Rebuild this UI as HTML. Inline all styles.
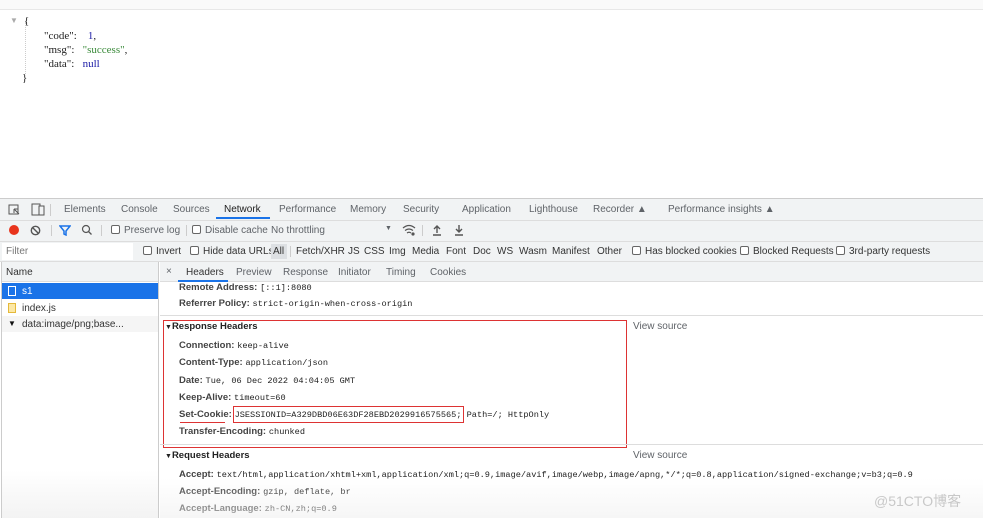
<!DOCTYPE html>
<html><head><meta charset="utf-8"><style>
*{margin:0;padding:0;box-sizing:border-box}
body{width:983px;height:518px;overflow:hidden;background:#fff;position:relative;font-family:"Liberation Sans",sans-serif;font-size:10px;color:#333}
.a{position:absolute;white-space:nowrap}
.j{font-family:"Liberation Serif","Noto Serif CJK SC",serif;font-size:11px;color:#222}
.mono{font-family:"Liberation Mono",monospace;font-size:8.6px;color:#222}
.k{font-weight:bold;color:#444;font-size:9.5px}
.g{color:#5f6368}
.cb{display:inline-block;width:9px;height:9px;border:1px solid #666;border-radius:2px;vertical-align:-1px;margin-right:4px;background:#fff}
</style></head><body>
<div class="a" style="left:0;top:0;width:983px;height:10px;background:#fafafa;border-bottom:1px solid #e8e8e8"></div>
<div class="a" style="left:10px;top:16px;color:#aaa;font-size:8px">▼</div>
<div class="a" style="left:25px;top:22px;width:1px;height:52px;border-left:1px dotted #ccc"></div>
<div class="a j" style="left:24px;top:15px">{</div>
<div class="a j" style="left:44px;top:30px">"code":&nbsp;&nbsp;&nbsp; <span style="color:#1a1aa6">1</span>,</div>
<div class="a j" style="left:44px;top:44px">"msg":&nbsp;&nbsp; <span style="color:#3a8a3a">"success"</span>,</div>
<div class="a j" style="left:44px;top:58px">"data":&nbsp;&nbsp; <span style="color:#1a1aa6">null</span></div>
<div class="a j" style="left:22px;top:72px">}</div>

<!-- devtools -->
<div class="a" style="left:0;top:198px;width:983px;height:64px;background:#f1f3f4;border-top:1px solid #ccc"></div>
<div class="a" style="left:0;top:220px;width:983px;border-top:1px solid #ddd"></div>
<div class="a" style="left:0;top:241px;width:983px;border-top:1px solid #ddd"></div>
<div class="a" style="left:0;top:261px;width:983px;border-top:1px solid #ddd"></div>
<svg class="a" style="left:8px;top:203px" width="40" height="14"><rect x="1" y="2" width="9" height="9" fill="none" stroke="#555"/><path d="M6 6l5 5M6 6v4M6 6h4" stroke="#555" fill="none"/><rect x="24" y="1" width="8" height="11" fill="none" stroke="#555"/><rect x="31" y="3" width="5" height="9" fill="#f1f3f4" stroke="#555"/></svg>
<div class="a" style="left:50px;top:204px;height:12px;border-left:1px solid #ccc"></div>
<div class="a g" style="top:204px;left:64px">Elements</div>
<div class="a g" style="top:204px;left:121px">Console</div>
<div class="a g" style="top:204px;left:173px">Sources</div>
<div class="a" style="top:204px;left:224px;color:#222">Network</div>
<div class="a" style="top:217px;left:216px;width:54px;height:2px;background:#1a73e8"></div>
<div class="a g" style="top:204px;left:279px">Performance</div>
<div class="a g" style="top:204px;left:350px">Memory</div>
<div class="a g" style="top:204px;left:403px">Security</div>
<div class="a g" style="top:204px;left:462px">Application</div>
<div class="a g" style="top:204px;left:529px">Lighthouse</div>
<div class="a g" style="top:204px;left:593px">Recorder ▲</div>
<div class="a g" style="top:204px;left:668px">Performance insights ▲</div>

<div class="a" style="left:9px;top:225px;width:10px;height:10px;border-radius:50%;background:#e8341c"></div>
<svg class="a" style="left:30px;top:225px" width="11" height="11"><circle cx="5.5" cy="5.5" r="4.2" fill="none" stroke="#555" stroke-width="1.4"/><path d="M2.5 2.5l6 6" stroke="#555" stroke-width="1.4"/></svg>
<div class="a" style="left:51px;top:225px;height:11px;border-left:1px solid #ccc"></div>
<svg class="a" style="left:59px;top:225px" width="12" height="11"><path d="M1 1h10L7 6v4L5 9V6z" fill="none" stroke="#1a73e8" stroke-width="1.5"/></svg>
<svg class="a" style="left:81px;top:224px" width="12" height="12"><circle cx="5" cy="5" r="3.5" fill="none" stroke="#555" stroke-width="1.2"/><path d="M7.5 7.5l3 3" stroke="#555" stroke-width="1.3"/></svg>
<div class="a" style="left:101px;top:225px;height:11px;border-left:1px solid #ccc"></div>
<div class="a g" style="top:225px;left:111px"><span class="cb"></span>Preserve log</div>
<div class="a" style="left:186px;top:225px;height:11px;border-left:1px solid #ccc"></div>
<div class="a g" style="top:225px;left:192px"><span class="cb"></span>Disable cache</div>
<div class="a g" style="top:225px;left:271px">No throttling</div>
<div class="a g" style="top:225px;left:385px;font-size:7px">▼</div>
<svg class="a" style="left:402px;top:224px" width="14" height="12"><path d="M1 4q6-5 12 0M3 6.5q4-3 8 0M5 9q2-1.5 4 0" fill="none" stroke="#555" stroke-width="1.2"/><circle cx="11" cy="10" r="1.6" fill="#555"/></svg>
<div class="a" style="left:422px;top:225px;height:11px;border-left:1px solid #ccc"></div>
<svg class="a" style="left:432px;top:224px" width="10" height="12"><path d="M5 2v7M2 5l3-3 3 3M1 11h8" fill="none" stroke="#555" stroke-width="1.4"/></svg>
<svg class="a" style="left:454px;top:224px" width="10" height="12"><path d="M5 1v7M2 5l3 3 3-3M1 11h8" fill="none" stroke="#555" stroke-width="1.4"/></svg>

<div class="a" style="left:2px;top:243px;width:131px;height:17px;background:#fff"></div>
<div class="a" style="top:246px;left:6px;color:#777">Filter</div>
<div class="a" style="top:246px;left:143px;color:#333"><span class="cb"></span>Invert</div>
<div class="a" style="top:246px;left:190px;color:#333"><span class="cb"></span>Hide data URLs</div>
<div class="a" style="left:271px;top:244px;width:16px;height:15px;background:#dde0e3"></div>
<div class="a" style="top:246px;left:273px;color:#333">All</div>
<div class="a" style="left:290px;top:246px;height:11px;border-left:1px solid #ccc"></div>
<div class="a" style="top:246px;left:296px">Fetch/XHR</div>
<div class="a" style="top:246px;left:348px">JS</div>
<div class="a" style="top:246px;left:364px">CSS</div>
<div class="a" style="top:246px;left:389px">Img</div>
<div class="a" style="top:246px;left:412px">Media</div>
<div class="a" style="top:246px;left:446px">Font</div>
<div class="a" style="top:246px;left:473px">Doc</div>
<div class="a" style="top:246px;left:497px">WS</div>
<div class="a" style="top:246px;left:519px">Wasm</div>
<div class="a" style="top:246px;left:552px">Manifest</div>
<div class="a" style="top:246px;left:597px">Other</div>
<div class="a" style="top:246px;left:632px;color:#333"><span class="cb"></span>Has blocked cookies</div>
<div class="a" style="top:246px;left:740px;color:#333"><span class="cb"></span>Blocked Requests</div>
<div class="a" style="top:246px;left:836px;color:#333"><span class="cb"></span>3rd-party requests</div>

<!-- name column -->
<div class="a" style="left:1px;top:262px;width:158px;height:256px;border-left:1px solid #ccc;border-right:1px solid #ccc;background:#fff"></div>
<div class="a" style="left:2px;top:262px;width:156px;height:20px;background:#f1f3f4;border-bottom:1px solid #ddd"></div>
<div class="a" style="top:267px;left:6px;color:#333">Name</div>
<div class="a" style="left:2px;top:283px;width:156px;height:16px;background:#1a73e8"></div>
<div class="a" style="left:8px;top:286px;width:8px;height:10px;border:1px solid #fff"></div>
<div class="a" style="top:286px;left:22px;color:#fff">s1</div>
<div class="a" style="left:8px;top:303px;width:8px;height:10px;background:#fce8a6;border:1px solid #e5b93a"></div>
<div class="a" style="top:303px;left:22px;color:#333">index.js</div>
<div class="a" style="left:2px;top:316px;width:156px;height:16px;background:#f5f5f5"></div>
<div class="a" style="top:319px;left:8px;color:#111;font-size:8px">▼</div>
<div class="a" style="top:319px;left:22px;color:#333">data:image/png;base...</div>
<div class="a" style="left:2px;top:470px;width:156px;height:48px;background:linear-gradient(#fff,#f3f3f3)"></div>

<!-- details -->
<div class="a" style="left:160px;top:262px;width:823px;height:20px;background:#f1f3f4;border-bottom:1px solid #ddd"></div>
<div class="a g" style="top:266px;left:166px">×</div>
<div class="a" style="top:267px;left:186px;color:#333">Headers</div>
<div class="a" style="top:280px;left:178px;width:50px;height:2px;background:#1a73e8"></div>
<div class="a g" style="top:267px;left:236px">Preview</div>
<div class="a g" style="top:267px;left:283px">Response</div>
<div class="a g" style="top:267px;left:338px">Initiator</div>
<div class="a g" style="top:267px;left:386px">Timing</div>
<div class="a g" style="top:267px;left:430px">Cookies</div>

<div class="a" style="top:282px;left:179px"><span class="k">Remote Address:</span> <span class="mono">[::1]:8080</span></div>
<div class="a" style="top:298px;left:179px"><span class="k">Referrer Policy:</span> <span class="mono">strict-origin-when-cross-origin</span></div>
<div class="a" style="left:160px;top:315px;width:823px;border-top:1px solid #ddd"></div>
<div class="a" style="left:163px;top:320px;width:464px;height:128px;border:1.5px solid #d33"></div>
<div class="a" style="top:321px;left:165px;font-weight:bold;color:#222;font-size:9.5px"><span style="font-size:7px">▼</span>Response Headers</div>
<div class="a g" style="top:321px;left:633px">View source</div>
<div class="a" style="top:340px;left:179px"><span class="k">Connection:</span> <span class="mono">keep-alive</span></div>
<div class="a" style="top:357px;left:179px"><span class="k">Content-Type:</span> <span class="mono">application/json</span></div>
<div class="a" style="top:375px;left:179px"><span class="k">Date:</span> <span class="mono">Tue, 06 Dec 2022 04:04:05 GMT</span></div>
<div class="a" style="top:392px;left:179px"><span class="k">Keep-Alive:</span> <span class="mono">timeout=60</span></div>
<div class="a" style="top:409px;left:179px"><span class="k">Set-Cookie:</span> <span class="mono">JSESSIONID=A329DBD06E63DF28EBD2029916575565; Path=/; HttpOnly</span></div>
<div class="a" style="left:233px;top:406px;width:231px;height:17px;border:1.5px solid #d33"></div>
<div class="a" style="left:180px;top:422px;width:45px;border-top:1px solid #d33"></div>
<div class="a" style="top:426px;left:179px"><span class="k">Transfer-Encoding:</span> <span class="mono">chunked</span></div>
<div class="a" style="left:160px;top:444px;width:823px;border-top:1px solid #ddd"></div>
<div class="a" style="top:450px;left:165px;font-weight:bold;color:#222;font-size:9.5px"><span style="font-size:7px">▼</span>Request Headers</div>
<div class="a g" style="top:450px;left:633px">View source</div>
<div class="a" style="top:469px;left:179px"><span class="k">Accept:</span> <span class="mono">text/html,application/xhtml+xml,application/xml;q=0.9,image/avif,image/webp,image/apng,*/*;q=0.8,application/signed-exchange;v=b3;q=0.9</span></div>
<div class="a" style="top:486px;left:179px"><span class="k">Accept-Encoding:</span> <span class="mono">gzip, deflate, br</span></div>
<div class="a" style="top:503px;left:179px"><span class="k">Accept-Language:</span> <span class="mono">zh-CN,zh;q=0.9</span></div>
<div class="a" style="left:160px;top:478px;width:823px;height:40px;background:linear-gradient(rgba(255,255,255,0),rgba(240,240,240,.6))"></div>
<div class="a" style="top:491px;left:874px;color:#c8c8c8;font-size:14px;font-family:'Liberation Sans','Noto Sans CJK SC',sans-serif">@51CTO博客</div>
</body></html>
